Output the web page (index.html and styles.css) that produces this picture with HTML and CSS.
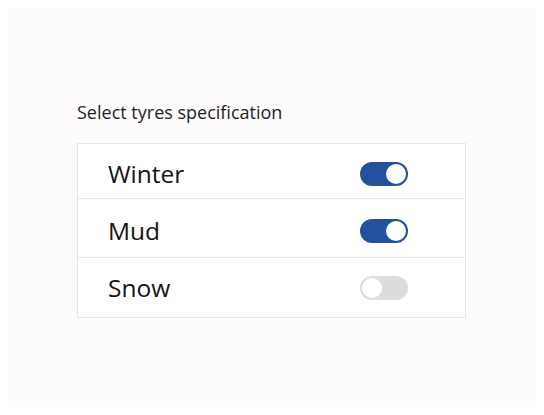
FILE: index.html
```html
<!DOCTYPE html>
<html>
<head>
<meta charset="utf-8">
<link rel="stylesheet" href="styles.css">
</head>
<body>
<div class="panel">
  <div class="label">Select tyres specification</div>
  <div class="card">
    <div class="row row-first">
      <span class="name">Winter</span>
      <span class="toggle on"><span class="knob"></span></span>
    </div>
    <div class="row row-mid">
      <span class="name">Mud</span>
      <span class="toggle on"><span class="knob"></span></span>
    </div>
    <div class="row row-last">
      <span class="name">Snow</span>
      <span class="toggle off"><span class="knob"></span></span>
    </div>
  </div>
</div>
</body>
</html>
```

FILE: styles.css
```css
html, body {
  margin: 0;
  padding: 0;
  background: #ffffff;
}
body {
  padding: 8px;
  font-family: "Open Sans", "Noto Sans", sans-serif;
  color: #1a1a1a;
}
.panel {
  background: #fdfbfc;
  height: 399px;
  box-sizing: border-box;
  padding: 92px 70px 0 69px;
}
.label {
  font-size: 18px;
  line-height: 24px;
  color: #1f1f1f;
}
.card {
  margin-top: 19px;
  width: 389px;
  box-sizing: border-box;
  border: 1px solid #e6e6e6;
  background: #ffffff;
}
.row {
  display: flex;
  align-items: center;
  justify-content: space-between;
  box-sizing: border-box;
  padding-left: 30px;
  padding-right: 57px;
  border-top: 1px solid #e8e8e8;
}
.row-first {
  border-top: none;
  height: 54px;
  padding-top: 6px;
}
.row-mid {
  height: 59px;
  padding-top: 6px;
}
.row-last {
  height: 60px;
  padding-top: 0;
}
.name {
  font-size: 24.5px;
  line-height: 32px;
  color: #141414;
}
.toggle {
  position: relative;
  width: 48px;
  height: 24px;
  border-radius: 12px;
  box-sizing: border-box;
}
.toggle.on {
  background: #24519f;
}
.toggle.off {
  background: #dcdcdd;
}
.knob {
  position: absolute;
  top: 2px;
  width: 20px;
  height: 20px;
  border-radius: 50%;
  background: #ffffff;
  box-sizing: border-box;
}
.toggle.on .knob {
  right: 2px;
}
.toggle.off .knob {
  left: 2px;
}
```
